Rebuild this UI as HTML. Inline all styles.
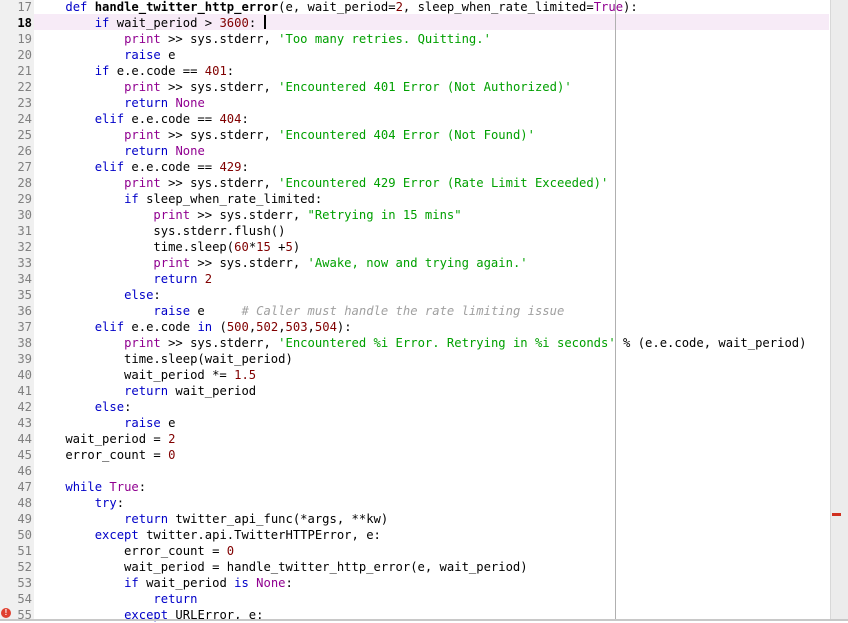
<!DOCTYPE html>
<html><head><meta charset="utf-8"><style>
body{margin:0;width:848px;height:621px;overflow:hidden;background:#fff;position:relative;font-family:"DejaVu Sans Mono","Liberation Mono",monospace;font-size:12.2px;}
#gut{position:absolute;left:0;top:0;width:34px;height:621px;background:#f0f0f0;}
#hl{position:absolute;left:34px;top:14px;width:795px;height:16px;background:#f7ebf7;}
#margin{position:absolute;left:615px;top:0;width:1px;height:621px;background:#b0b0b0;}
#sb{position:absolute;left:830px;top:0;width:18px;height:621px;background:#ececec;border-left:1px solid #d8d8d8;}
#bot{position:absolute;left:0;top:619px;width:848px;height:2px;background:#c8c8c8;}
#err{position:absolute;left:832px;top:513px;width:9px;height:3px;background:#d03020;}
.ln{position:absolute;left:0;width:32px;text-align:right;color:#808080;line-height:16px;white-space:pre;}
.cd{position:absolute;left:36px;line-height:16px;white-space:pre;color:#000;}
.k{color:#0000c8}.s{color:#00a000}.n{color:#800000}.p{color:#900090}.c{color:#a0a0a0;font-style:italic}.b{font-weight:bold}
#cur{position:absolute;left:264px;top:15px;width:2px;height:14px;background:#000;}
#ico{position:absolute;left:1px;top:608px;width:10px;height:10px;border-radius:50%;background:#e04030;color:#fff;font-size:8px;line-height:10px;text-align:center;font-weight:bold;font-family:"Liberation Sans",sans-serif}
</style></head><body>
<div id="gut"></div><div id="hl"></div><div id="margin"></div><div id="sb"></div><div id="err"></div>
<div class="ln" style="top:-1px;line-height:16px">17
<b style="color:#000">18</b>
19
20
21
22
23
24
25
26
27
28
29
30
31
32
33
34
35
36
37
38
39
40
41
42
43
44
45
46
47
48
49
50
51
52
53
54
55</div>
<div id="ico">!</div>
<div class="cd" style="top:-1px">    <span class="k">def</span> <span class="b">handle_twitter_http_error</span>(e, wait_period=<span class="n">2</span>, sleep_when_rate_limited=<span class="p">True</span>):
        <span class="k">if</span> wait_period &gt; <span class="n">3600</span>:
            <span class="p">print</span> &gt;&gt; sys.stderr, <span class="s">'Too many retries. Quitting.'</span>
            <span class="k">raise</span> e
        <span class="k">if</span> e.e.code == <span class="n">401</span>:
            <span class="p">print</span> &gt;&gt; sys.stderr, <span class="s">'Encountered 401 Error (Not Authorized)'</span>
            <span class="k">return</span> <span class="p">None</span>
        <span class="k">elif</span> e.e.code == <span class="n">404</span>:
            <span class="p">print</span> &gt;&gt; sys.stderr, <span class="s">'Encountered 404 Error (Not Found)'</span>
            <span class="k">return</span> <span class="p">None</span>
        <span class="k">elif</span> e.e.code == <span class="n">429</span>:
            <span class="p">print</span> &gt;&gt; sys.stderr, <span class="s">'Encountered 429 Error (Rate Limit Exceeded)'</span>
            <span class="k">if</span> sleep_when_rate_limited:
                <span class="p">print</span> &gt;&gt; sys.stderr, <span class="s">"Retrying in 15 mins"</span>
                sys.stderr.flush()
                time.sleep(<span class="n">60</span>*<span class="n">15</span> +<span class="n">5</span>)
                <span class="p">print</span> &gt;&gt; sys.stderr, <span class="s">'Awake, now and trying again.'</span>
                <span class="k">return</span> <span class="n">2</span>
            <span class="k">else</span>:
                <span class="k">raise</span> e     <span class="c"># Caller must handle the rate limiting issue</span>
        <span class="k">elif</span> e.e.code <span class="k">in</span> (<span class="n">500</span>,<span class="n">502</span>,<span class="n">503</span>,<span class="n">504</span>):
            <span class="p">print</span> &gt;&gt; sys.stderr, <span class="s">'Encountered %i Error. Retrying in %i seconds'</span> % (e.e.code, wait_period)
            time.sleep(wait_period)
            wait_period *= <span class="n">1.5</span>
            <span class="k">return</span> wait_period
        <span class="k">else</span>:
            <span class="k">raise</span> e
    wait_period = <span class="n">2</span>
    error_count = <span class="n">0</span>

    <span class="k">while</span> <span class="p">True</span>:
        <span class="k">try</span>:
            <span class="k">return</span> twitter_api_func(*args, **kw)
        <span class="k">except</span> twitter.api.TwitterHTTPError, e:
            error_count = <span class="n">0</span>
            wait_period = handle_twitter_http_error(e, wait_period)
            <span class="k">if</span> wait_period <span class="k">is</span> <span class="p">None</span>:
                <span class="k">return</span>
            <span class="k">except</span> URLError, e:</div>
<div id="cur"></div>
<div id="bot"></div>
</body></html>
